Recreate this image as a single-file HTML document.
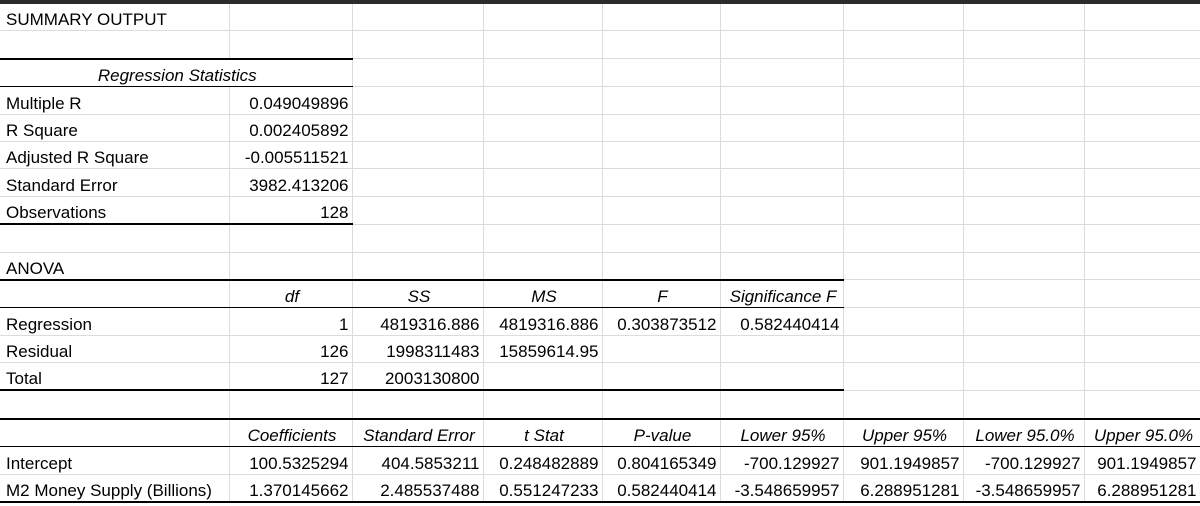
<!DOCTYPE html>
<html><head><meta charset="utf-8"><style>
html,body{margin:0;padding:0;background:#fff;width:1200px;height:506px;overflow:hidden}
.bar{position:absolute;left:0;top:0;width:1200px;height:4px;background:#2b2b2b}
table{position:absolute;left:0;top:4px;border-collapse:collapse;table-layout:fixed;width:1200px;font-family:"Liberation Sans",sans-serif;font-size:17px;color:#000}
td{height:25.4px;border-right:1px solid #dcdcdc;border-bottom:1px solid #dcdcdc;padding:0 3px 1px 6px;white-space:nowrap;overflow:visible;line-height:19px;vertical-align:bottom}
td.r{text-align:right}
td.c{text-align:center;font-style:italic}
.tk td.k{border-bottom:2px solid #000}
.tn td.k{border-bottom:1px solid #000}
</style></head><body>
<div class="bar"></div>
<table>
<colgroup><col style="width:229px"><col style="width:123px"><col style="width:131px"><col style="width:119px"><col style="width:118px"><col style="width:123px"><col style="width:120px"><col style="width:121px"><col style="width:116px"></colgroup>
<tr><td>SUMMARY OUTPUT</td><td></td><td></td><td></td><td></td><td></td><td></td><td></td><td></td></tr>
<tr class="tk"><td class="k"></td><td class="k"></td><td></td><td></td><td></td><td></td><td></td><td></td><td></td></tr>
<tr class="tn"><td class="c k" colspan="2">Regression Statistics</td><td></td><td></td><td></td><td></td><td></td><td></td><td></td></tr>
<tr><td>Multiple R</td><td class="r">0.049049896</td><td></td><td></td><td></td><td></td><td></td><td></td><td></td></tr>
<tr><td>R Square</td><td class="r">0.002405892</td><td></td><td></td><td></td><td></td><td></td><td></td><td></td></tr>
<tr><td>Adjusted R Square</td><td class="r">-0.005511521</td><td></td><td></td><td></td><td></td><td></td><td></td><td></td></tr>
<tr><td>Standard Error</td><td class="r">3982.413206</td><td></td><td></td><td></td><td></td><td></td><td></td><td></td></tr>
<tr class="tk"><td class="k">Observations</td><td class="r k">128</td><td></td><td></td><td></td><td></td><td></td><td></td><td></td></tr>
<tr><td></td><td></td><td></td><td></td><td></td><td></td><td></td><td></td><td></td></tr>
<tr class="tk"><td class="k">ANOVA</td><td class="k"></td><td class="k"></td><td class="k"></td><td class="k"></td><td class="k"></td><td></td><td></td><td></td></tr>
<tr class="tn"><td class="k"></td><td class="c k">df</td><td class="c k">SS</td><td class="c k">MS</td><td class="c k">F</td><td class="c k">Significance F</td><td></td><td></td><td></td></tr>
<tr><td>Regression</td><td class="r">1</td><td class="r">4819316.886</td><td class="r">4819316.886</td><td class="r">0.303873512</td><td class="r">0.582440414</td><td></td><td></td><td></td></tr>
<tr><td>Residual</td><td class="r">126</td><td class="r">1998311483</td><td class="r">15859614.95</td><td></td><td></td><td></td><td></td><td></td></tr>
<tr class="tk"><td class="k">Total</td><td class="r k">127</td><td class="r k">2003130800</td><td class="k"></td><td class="k"></td><td class="k"></td><td></td><td></td><td></td></tr>
<tr class="tk"><td class="k"></td><td class="k"></td><td class="k"></td><td class="k"></td><td class="k"></td><td class="k"></td><td class="k"></td><td class="k"></td><td class="k"></td></tr>
<tr class="tn"><td class="k"></td><td class="c k">Coefficients</td><td class="c k">Standard Error</td><td class="c k">t Stat</td><td class="c k">P-value</td><td class="c k">Lower 95%</td><td class="c k">Upper 95%</td><td class="c k">Lower 95.0%</td><td class="c k">Upper 95.0%</td></tr>
<tr><td>Intercept</td><td class="r">100.5325294</td><td class="r">404.5853211</td><td class="r">0.248482889</td><td class="r">0.804165349</td><td class="r">-700.129927</td><td class="r">901.1949857</td><td class="r">-700.129927</td><td class="r">901.1949857</td></tr>
<tr class="tk"><td class="k">M2 Money Supply (Billions)</td><td class="r k">1.370145662</td><td class="r k">2.485537488</td><td class="r k">0.551247233</td><td class="r k">0.582440414</td><td class="r k">-3.548659957</td><td class="r k">6.288951281</td><td class="r k">-3.548659957</td><td class="r k">6.288951281</td></tr>
</table>
</body></html>
